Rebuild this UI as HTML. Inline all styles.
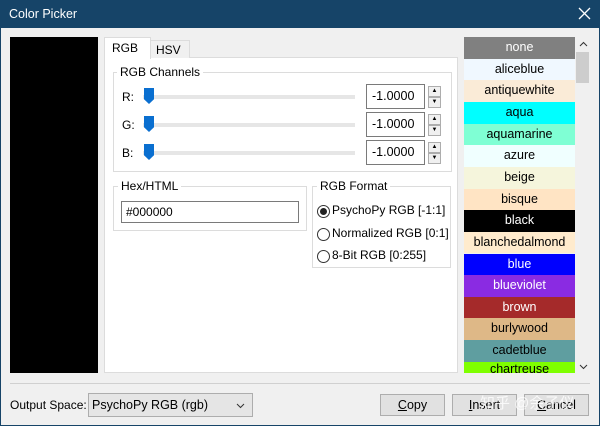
<!DOCTYPE html>
<html><head><meta charset="utf-8"><style>
*{box-sizing:border-box;margin:0;padding:0}
body{width:600px;height:426px;overflow:hidden;background:#f0f0f0;font-family:"Segoe UI","Liberation Sans","Noto Sans CJK SC",sans-serif;font-size:12px;color:#000;position:relative}
.a{position:absolute}
.title{left:0;top:0;width:600px;height:28px;background:#164468;color:#fff;font-size:12.5px;line-height:28px;padding-left:9px}
.bl{left:0;top:28px;width:1px;height:398px;background:#164468}
.br{right:0;top:28px;width:1px;height:398px;background:#164468}
.bb{left:0;bottom:0;width:600px;height:1px;background:#164468}
.grp{border:1px solid #dcdcdc}
.lg{background:#fff;padding:0 3px;line-height:14px}
.track{height:4px;background:#e6e6e6;width:212px}
.thumb{width:10px;height:16px;background:#0a6fd0;clip-path:polygon(0 0,100% 0,100% 70%,50% 100%,0 70%)}
.spin{width:59px;height:25px;border:1px solid #7a7a7a;background:#fff;line-height:23px;padding-left:5px;font-size:12.5px}
.sb{width:13px;height:11px;border:1px solid #adadad;background:#f0f0f0;font-size:6px;line-height:9px;text-align:center}
.radio{width:13px;height:13px;border:1px solid #333;border-radius:50%;background:#fff}
.item{left:464px;width:111px;height:21.65px;text-align:center;line-height:21px;font-size:12.5px}
.btn{width:65px;height:22px;border:1px solid #adadad;background:#e1e1e1;text-align:center;line-height:20px;font-size:12.5px}
.rt{font-size:12px}
</style></head><body>
<div class="a title">Color Picker</div>
<svg class="a" style="left:578px;top:7px" width="13" height="13"><path d="M1 1L12 12M12 1L1 12" stroke="#fff" stroke-width="1.3"/></svg>
<div class="a bl"></div><div class="a br"></div><div class="a bb"></div>

<div class="a" style="left:10px;top:37px;width:88px;height:336px;background:#000"></div>

<div class="a" style="left:104px;top:57px;width:354px;height:316px;background:#fff;border:1px solid #dcdcdc"></div>
<div class="a" style="left:150px;top:40px;width:40px;height:18px;background:#f0f0f0;border:1px solid #dcdcdc;border-bottom:none;padding-left:5px;line-height:18px">HSV</div>
<div class="a" style="left:104px;top:37px;width:47px;height:22px;background:#fff;border:1px solid #dcdcdc;border-bottom:none;padding-left:7px;line-height:20px">RGB</div>

<div class="a grp" style="left:113px;top:72px;width:339px;height:100px"></div>
<div class="a lg" style="left:117px;top:65px">RGB Channels</div>

<div class="a" style="left:122px;top:90px">R:</div>
<div class="a" style="left:122px;top:118px">G:</div>
<div class="a" style="left:122px;top:146px">B:</div>
<div class="a track" style="left:143px;top:95px"></div>
<div class="a track" style="left:143px;top:123px"></div>
<div class="a track" style="left:143px;top:151px"></div>
<div class="a thumb" style="left:144px;top:88px"></div>
<div class="a thumb" style="left:144px;top:116px"></div>
<div class="a thumb" style="left:144px;top:144px"></div>
<div class="a spin" style="left:366px;top:84px">-1.0000</div>
<div class="a spin" style="left:366px;top:112px">-1.0000</div>
<div class="a spin" style="left:366px;top:140px">-1.0000</div>
<div class="a sb" style="left:428px;top:86px">▲</div><div class="a sb" style="left:428px;top:97px">▼</div>
<div class="a sb" style="left:428px;top:114px">▲</div><div class="a sb" style="left:428px;top:125px">▼</div>
<div class="a sb" style="left:428px;top:142px">▲</div><div class="a sb" style="left:428px;top:153px">▼</div>

<div class="a grp" style="left:113px;top:186px;width:194px;height:45px"></div>
<div class="a lg" style="left:118px;top:179px">Hex/HTML</div>
<div class="a" style="left:121px;top:201px;width:178px;height:22px;border:1px solid #7a7a7a;background:#fff;padding-left:4px;line-height:20px">#000000</div>

<div class="a grp" style="left:312px;top:186px;width:139px;height:82px"></div>
<div class="a lg" style="left:317px;top:179px">RGB Format</div>
<div class="a radio" style="left:317px;top:205px"></div>
<div class="a" style="left:320px;top:208px;width:7px;height:7px;border-radius:50%;background:#222"></div>
<div class="a rt" style="left:332px;top:203px">PsychoPy RGB [-1:1]</div>
<div class="a radio" style="left:317px;top:228px"></div>
<div class="a rt" style="left:332px;top:226px">Normalized RGB [0:1]</div>
<div class="a radio" style="left:317px;top:250px"></div>
<div class="a rt" style="left:332px;top:248px">8-Bit RGB [0:255]</div>

<div class="a item" style="top:37px;background:#808080;color:#fff">none</div>
<div class="a item" style="top:58.6px;background:#f0f8ff">aliceblue</div>
<div class="a item" style="top:80.3px;background:#faebd7">antiquewhite</div>
<div class="a item" style="top:102px;background:#00ffff">aqua</div>
<div class="a item" style="top:123.6px;background:#7fffd4">aquamarine</div>
<div class="a item" style="top:145.2px;background:#f0ffff">azure</div>
<div class="a item" style="top:166.9px;background:#f5f5dc">beige</div>
<div class="a item" style="top:188.5px;background:#ffe4c4">bisque</div>
<div class="a item" style="top:210.2px;background:#000;color:#fff">black</div>
<div class="a item" style="top:231.8px;background:#ffebcd">blanchedalmond</div>
<div class="a item" style="top:253.5px;background:#0000ff;color:#fff">blue</div>
<div class="a item" style="top:275.1px;background:#8a2be2;color:#fff">blueviolet</div>
<div class="a item" style="top:296.8px;background:#a52a2a;color:#fff">brown</div>
<div class="a item" style="top:318.4px;background:#deb887">burlywood</div>
<div class="a item" style="top:340px;background:#5f9ea0">cadetblue</div>
<div class="a item" style="top:361.7px;height:11.3px;background:#7fff00;line-height:14px;overflow:hidden">chartreuse</div>
<svg class="a" style="left:579px;top:41px" width="9" height="6"><path d="M1 5L4.5 1.5L8 5" stroke="#333" fill="none"/></svg>
<div class="a" style="left:576px;top:52px;width:13px;height:31px;background:#cdcdcd"></div>
<svg class="a" style="left:579px;top:364px" width="9" height="6"><path d="M1 1L4.5 4.5L8 1" stroke="#333" fill="none"/></svg>

<div class="a" style="left:10px;top:383px;width:580px;height:1px;background:#d0d0d0"></div>
<div class="a" style="left:10px;top:398px;font-size:12px">Output Space:</div>
<div class="a" style="left:88px;top:393px;width:165px;height:24px;border:1px solid #adadad;background:#e5e5e5;padding-left:3px;line-height:22px;font-size:12.5px">PsychoPy RGB (rgb)<svg style="position:absolute;right:7px;top:9px" width="9" height="6"><path d="M1 1L4.5 4.5L8 1" stroke="#333" fill="none"/></svg></div>
<div class="a btn" style="left:380px;top:394px"><u>C</u>opy</div>
<div class="a btn" style="left:452px;top:394px"><u>I</u>nsert</div>
<div class="a btn" style="left:524px;top:394px"><u>C</u>ancel</div>
<div class="a" style="left:480px;top:392px;color:rgba(255,255,255,.8);font-size:15px">知乎 @余子仪</div>
</body></html>
